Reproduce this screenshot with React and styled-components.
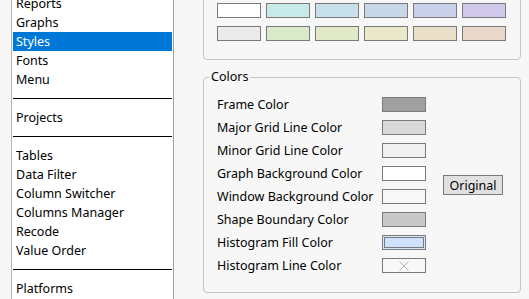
import React from "react";
import styled, { createGlobalStyle } from "styled-components";

const Global = createGlobalStyle`
  html, body { margin: 0; padding: 0; background: #f7f7f7; }
  body { font-family: "Noto Sans", "Segoe UI", sans-serif; font-size: 12.5px; color: #000; }
  #root { width: 529px; height: 299px; overflow: hidden; }
`;

const Page = styled.div`
  display: flex;
  width: 529px;
  height: 299px;
  overflow: hidden;
  background: #f7f7f7;
`;

const Sidebar = styled.div`
  width: 163px;
  margin-left: 11px;
  height: 299px;
  overflow: hidden;
  background: #fff;
  border-left: 1px solid #b4b4b4;
  border-right: 1px solid #a0a0a0;
  box-sizing: border-box;
`;

const List = styled.div`
  display: flex;
  flex-direction: column;
  margin-top: -6px;
  padding: 0 1px;
`;

const Item = styled.div`
  height: 19px;
  line-height: 19px;
  padding-left: 3px;
  white-space: nowrap;
  background: ${(p) => (p.$selected ? "#0078d7" : "transparent")};
  color: ${(p) => (p.$selected ? "#fff" : "#000")};
`;

const Sep = styled.div`
  height: 19px;
  display: flex;
  align-items: center;
  &::after {
    content: "";
    flex: 1;
    height: 1px;
    background: #000;
  }
`;

const Main = styled.div`
  display: flex;
  flex-direction: column;
  margin-left: 29px;
  width: 318px;
`;

const TopGroup = styled.div`
  margin-top: -10px;
  border: 1px solid #c4c4c4;
  border-radius: 4px;
  padding: 12px 0 18px 13px;
  display: grid;
  grid-template-columns: repeat(6, 44px);
  column-gap: 5px;
  row-gap: 8px;
`;

const Swatch = styled.div`
  width: 44px;
  height: 15px;
  box-sizing: border-box;
  border: 1px solid #7a7a7a;
  background: ${(p) => p.$c};
  position: relative;
`;

const FillSwatch = styled(Swatch)`
  box-shadow: inset 0 0 0 1px #d6e6fb, inset 0 0 0 2px #7a7a7a;
`;

const Fieldset = styled.fieldset`
  margin: 9px 0 0 0;
  padding: 12px 0 19px 13px;
  border: 1px solid #c4c4c4;
  border-radius: 4px;
  min-width: 0;
  display: flex;
  align-items: center;
`;

const Legend = styled.legend`
  padding: 0 2px;
  margin-left: -8px;
  line-height: 16px;
`;

const Rows = styled.div`
  display: flex;
  flex-direction: column;
  gap: 8px;
`;

const Row = styled.div`
  display: flex;
  align-items: center;
  height: 15px;
`;

const Label = styled.div`
  width: 165px;
  white-space: nowrap;
`;

const Button = styled.button`
  margin-left: 17px;
  width: 60px;
  height: 20px;
  padding: 0;
  box-sizing: border-box;
  border: 1px solid #7a7a7a;
  background: #e1e1e1;
  font-family: inherit;
  font-size: 12.5px;
  color: #000;
`;

const topColors = [
  "#ffffff", "#c8ebe9", "#c8e0ea", "#c8d8e8", "#c9d0ea", "#d0c8ea",
  "#ebebeb", "#d9e9c9", "#e1e9c9", "#e9e9c9", "#e9dfc9", "#e9d8c9",
];

const colorRows = [
  ["Frame Color", "#a0a0a0"],
  ["Major Grid Line Color", "#d8d8d8"],
  ["Minor Grid Line Color", "#f0f0f0"],
  ["Graph Background Color", "#ffffff"],
  ["Window Background Color", "#f8f8f8"],
  ["Shape Boundary Color", "#c8c8c8"],
  ["Histogram Fill Color", "fill"],
  ["Histogram Line Color", "x"],
];

const XMark = () => (
  <svg width="42" height="13" viewBox="0 0 42 13" style={{ position: "absolute", left: 0, top: 0 }}>
    <path d="M16.5 2.5 L25.5 11.5 M25.5 2.5 L16.5 11.5" stroke="#b4b4b4" strokeWidth="1" fill="none" />
  </svg>
);

export default function App() {
  return (
    <Page>
      <Global />
      <Sidebar>
        <List>
          <Item>Reports</Item>
          <Item>Graphs</Item>
          <Item $selected>Styles</Item>
          <Item>Fonts</Item>
          <Item>Menu</Item>
          <Sep />
          <Item>Projects</Item>
          <Sep />
          <Item>Tables</Item>
          <Item>Data Filter</Item>
          <Item>Column Switcher</Item>
          <Item>Columns Manager</Item>
          <Item>Recode</Item>
          <Item>Value Order</Item>
          <Sep />
          <Item>Platforms</Item>
        </List>
      </Sidebar>
      <Main>
        <TopGroup>
          {topColors.map((c, i) => (
            <Swatch key={i} $c={c} />
          ))}
        </TopGroup>
        <Fieldset>
          <Legend>Colors</Legend>
          <Rows>
            {colorRows.map(([label, c]) => (
              <Row key={label}>
                <Label>{label}</Label>
                {c === "fill" ? (
                  <FillSwatch $c="#cfe3ff" />
                ) : c === "x" ? (
                  <Swatch $c="#f8f8f8">
                    <XMark />
                  </Swatch>
                ) : (
                  <Swatch $c={c} />
                )}
              </Row>
            ))}
          </Rows>
          <Button>Original</Button>
        </Fieldset>
      </Main>
    </Page>
  );
}
